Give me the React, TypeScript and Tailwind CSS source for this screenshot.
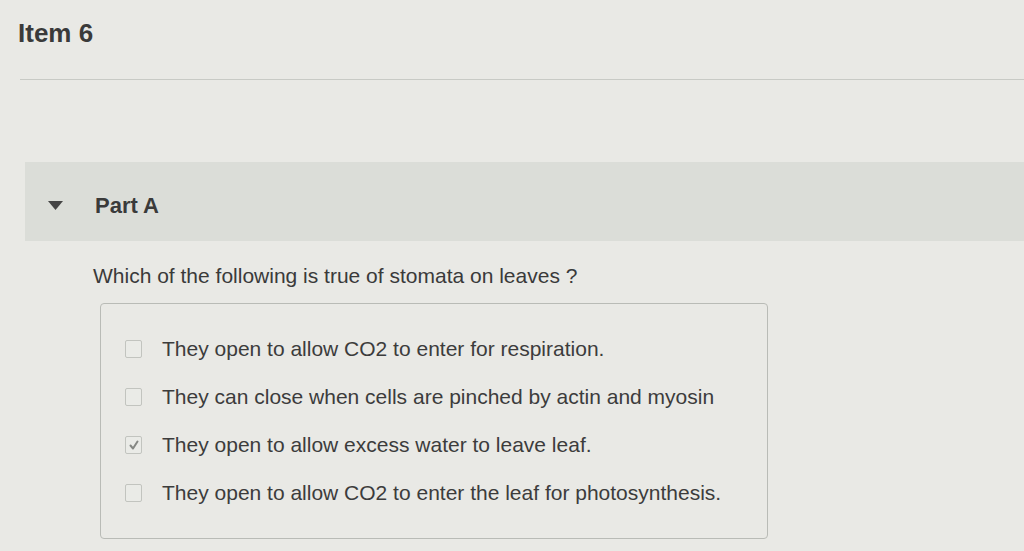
import React from "react";

const options = [
  { text: "They open to allow CO2 to enter for respiration.", checked: false },
  { text: "They can close when cells are pinched by actin and myosin", checked: false },
  { text: "They open to allow excess water to leave leaf.", checked: true },
  { text: "They open to allow CO2 to enter the leaf for photosynthesis.", checked: false },
];

function Box({ checked }: { checked: boolean }) {
  return (
    <div className="w-[17px] h-[18px] rounded-[2px] border border-[#c2c4bf] bg-[#eaebe7] flex items-center justify-center shrink-0">
      {checked && (
        <svg width="12" height="12" viewBox="0 0 12 12" fill="none">
          <path d="M2.5 6.5 L5 9.5 L9.5 2.5" stroke="#858783" strokeWidth="2" strokeLinecap="round" strokeLinejoin="round" />
        </svg>
      )}
    </div>
  );
}

export default function App() {
  return (
    <div
      className="w-full h-[551px] overflow-hidden bg-[#e9e9e5] text-[#3d3d3d] flex flex-col"
      style={{ fontFamily: '"Liberation Sans", Arial, sans-serif' }}
    >
      <div className="pl-[18px] pt-[18px] h-[79px]">
        <div className="text-[26px] font-bold leading-[30px] text-[#3a3a3a]">Item 6</div>
      </div>
      <div className="ml-[20px] border-t border-[#c8cac5]" />
      <div className="mt-[82px] ml-[25px] h-[79px] bg-[#dbddd8] flex items-center pt-[8px]">
        <svg className="ml-[23px]" width="15" height="9" viewBox="0 0 15 9">
          <path d="M0 0 H15 L7.5 9 Z" fill="#454545" />
        </svg>
        <div className="ml-[32px] text-[22px] font-bold text-[#3a3a3a] leading-[26px]">Part A</div>
      </div>
      <div className="mt-[23px] ml-[93px] text-[21px] leading-[24px] text-[#3a3a3a]">
        Which of the following is true of stomata on leaves ?
      </div>
      <div className="mt-[15px] ml-[100px] w-[668px] h-[236px] border border-[#b9bbb6] rounded-[4px] py-[21px] flex flex-col">
        {options.map((o, i) => (
          <div key={i} className="h-[48px] flex items-center">
            <div className="ml-[24px]">
              <Box checked={o.checked} />
            </div>
            <div className="ml-[20px] text-[21px] leading-[24px] text-[#3c3c3c]">{o.text}</div>
          </div>
        ))}
      </div>
    </div>
  );
}
